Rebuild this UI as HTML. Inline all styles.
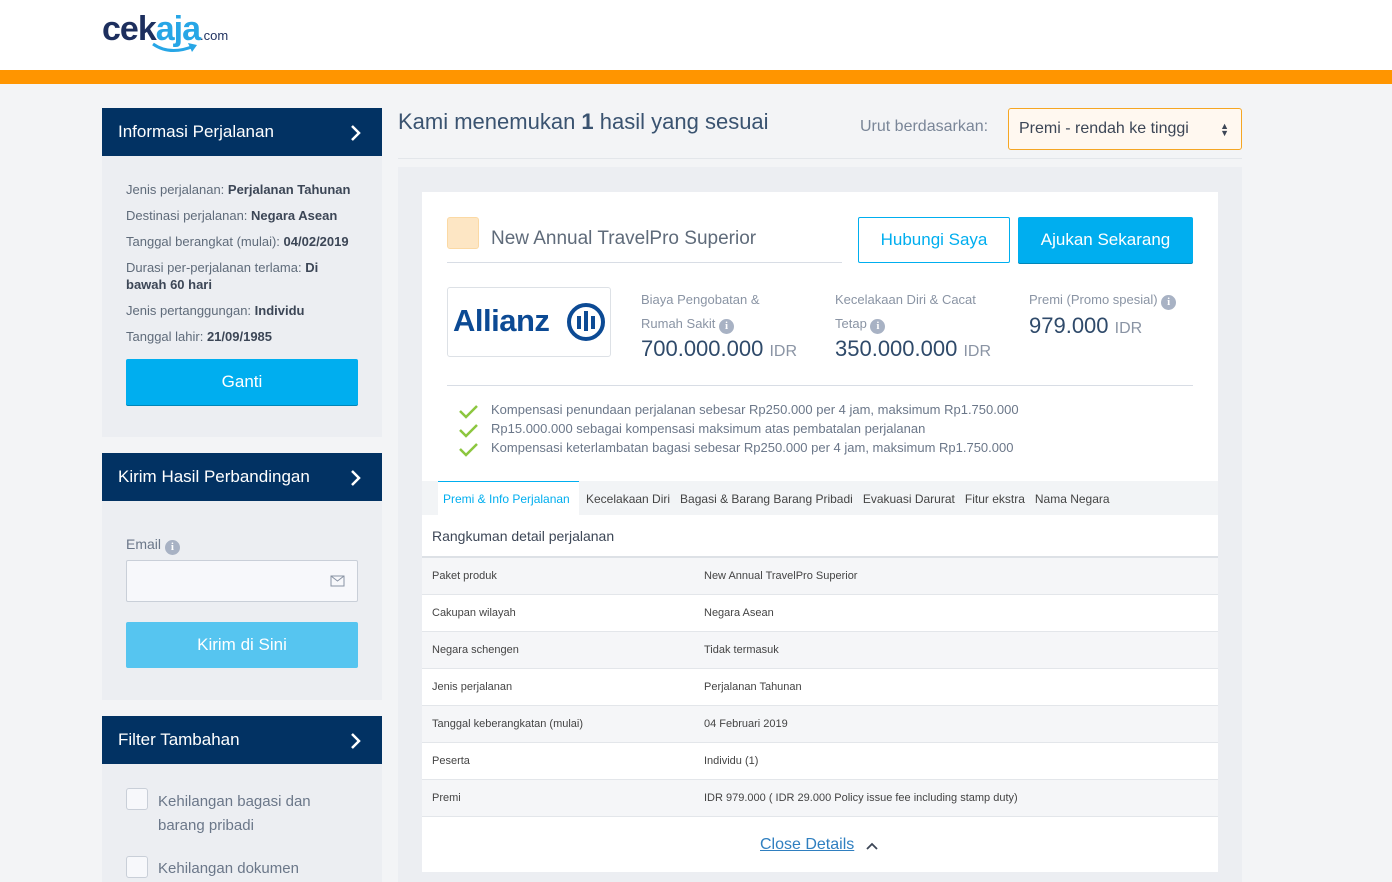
<!DOCTYPE html>
<html><head><meta charset="utf-8"><style>
*{box-sizing:border-box;margin:0;padding:0}
html,body{width:1392px;height:882px;overflow:hidden}
body{background:#f3f4f6;font-family:"Liberation Sans",sans-serif;color:#5a6a80;position:relative}
.a{position:absolute}
.hd{background:#023263;color:#fff;font-size:17px;height:48px;line-height:48px;padding-left:16px}
.hd svg{position:absolute;right:20px;top:16px}
.pb{background:#eceef2}
.btn{position:absolute;border-radius:2px;color:#fff;text-align:center;font-size:17px}
.sb p{font-size:13px;color:#5f6b7a;margin-bottom:9px;line-height:17px}
.sb b{color:#3c4656}
.row{position:absolute;left:422px;width:796px;height:37px;border-bottom:1px solid #e3e6ea;font-size:11px;color:#444;line-height:37px}
.row span{position:absolute;left:10px}.row i{font-style:normal;position:absolute;left:282px}
.info{display:inline-block;width:15px;height:15px;border-radius:50%;background:#a8b2c4;color:#fff;font-size:11px;line-height:15px;text-align:center;font-weight:bold;vertical-align:-1px;font-family:"Liberation Serif",serif}
</style></head><body>
<div class="a" style="left:0;top:0;width:1392px;height:70px;background:#fff"></div>
<div class="a" style="left:102px;top:10px;font-size:34px;font-weight:bold;letter-spacing:-1px;color:#1d2f5e">cek<span style="color:#27a6e6">aja</span><span style="font-size:13px;font-weight:normal;letter-spacing:0;color:#1d2f5e">.com</span></div>
<svg class="a" style="left:150px;top:40px" width="50" height="18"><path d="M3 4 Q20 16 44 6" stroke="#27a6e6" stroke-width="3" fill="none"/><path d="M38 3 L47 5 L42 12Z" fill="#27a6e6"/></svg>
<div class="a" style="left:0;top:70px;width:1392px;height:14px;background:#ff9500"></div>

<div class="a sb" style="left:102px;top:108px;width:280px">
<div class="hd" style="position:relative">Informasi Perjalanan<svg width="12" height="18"><path d="M2 2 L9 9 L2 16" stroke="#fff" stroke-width="2.5" fill="none"/></svg></div>
<div class="pb" style="height:281px;padding:25px 24px">
<p>Jenis perjalanan: <b>Perjalanan Tahunan</b></p>
<p>Destinasi perjalanan: <b>Negara Asean</b></p>
<p>Tanggal berangkat (mulai): <b>04/02/2019</b></p>
<p>Durasi per-perjalanan terlama: <b>Di bawah 60 hari</b></p>
<p>Jenis pertanggungan: <b>Individu</b></p>
<p>Tanggal lahir: <b>21/09/1985</b></p>
</div></div>
<div class="btn" style="left:126px;top:359px;width:232px;height:46px;line-height:46px;background:#00aeef;box-shadow:0 1px 0 #0086b8">Ganti</div>

<div class="a" style="left:102px;top:453px;width:280px">
<div class="hd" style="position:relative">Kirim Hasil Perbandingan<svg width="12" height="18"><path d="M2 2 L9 9 L2 16" stroke="#fff" stroke-width="2.5" fill="none"/></svg></div>
<div class="pb" style="height:199px"></div></div>
<div class="a" style="left:126px;top:536px;font-size:14px;color:#6b7789">Email <span class="info">i</span></div>
<div class="a" style="left:126px;top:560px;width:232px;height:42px;background:#f7f8fb;border:1px solid #c9cfd8;border-radius:2px"></div>
<svg class="a" style="left:330px;top:575px" width="15" height="12"><rect x="1" y="1" width="13" height="10" fill="none" stroke="#8a94a4"/><path d="M1 1 L7.5 6 L14 1" fill="none" stroke="#8a94a4"/></svg>
<div class="btn" style="left:126px;top:622px;width:232px;height:46px;line-height:46px;background:#56c5f0">Kirim di Sini</div>

<div class="a" style="left:102px;top:716px;width:280px">
<div class="hd" style="position:relative">Filter Tambahan<svg width="12" height="18"><path d="M2 2 L9 9 L2 16" stroke="#fff" stroke-width="2.5" fill="none"/></svg></div>
<div class="pb" style="height:130px"></div></div>
<div class="a" style="left:126px;top:788px;width:22px;height:22px;border:1px solid #c9cfd8;border-radius:3px;background:#f7f8fb"></div>
<div class="a" style="left:158px;top:790px;font-size:15px;line-height:24px;color:#6b7789">Kehilangan bagasi dan<br>barang pribadi</div>
<div class="a" style="left:126px;top:856px;width:22px;height:22px;border:1px solid #c9cfd8;border-radius:3px;background:#f7f8fb"></div>
<div class="a" style="left:158px;top:858px;font-size:15px;line-height:22px;color:#6b7789">Kehilangan dokumen</div>

<div class="a" style="left:398px;top:109px;font-size:22px;color:#3a5370">Kami menemukan <b>1</b> hasil yang sesuai</div>
<div class="a" style="left:860px;top:118px;font-size:16px;color:#7a8698">Urut berdasarkan:</div>
<div class="a" style="left:1008px;top:108px;width:234px;height:42px;border:1px solid #f5a623;border-radius:3px;background:#fff8f0;font-size:16px;line-height:40px;padding-left:10px;color:#3c4656">Premi - rendah ke tinggi<span style="position:absolute;right:12px;font-size:9px;line-height:7px;top:14px">▲<br>▼</span></div>
<div class="a" style="left:398px;top:158px;width:844px;height:1px;background:#e3e6ea"></div>
<div class="a" style="left:398px;top:167px;width:844px;height:715px;background:#eceef2"></div>
<div class="a" style="left:422px;top:192px;width:796px;height:680px;background:#fff"></div>

<div class="a" style="left:447px;top:217px;width:32px;height:32px;background:#fde6c4;border:1px solid #fbd9a4;border-radius:3px"></div>
<div class="a" style="left:491px;top:228px;font-size:19px;color:#5f6b7a">New Annual TravelPro Superior</div>
<div class="a" style="left:447px;top:262px;width:395px;height:1px;background:#d8dde5"></div>
<div class="btn" style="left:858px;top:217px;width:152px;height:46px;line-height:44px;border:1px solid #00aeef;color:#00aeef;background:#fff">Hubungi Saya</div>
<div class="btn" style="left:1018px;top:217px;width:175px;height:46px;line-height:46px;background:#00aeef;box-shadow:0 1px 0 #0086b8">Ajukan Sekarang</div>

<div class="a" style="left:447px;top:287px;width:164px;height:70px;border:1px solid #dde1e6;border-radius:3px"></div>
<div class="a" style="left:453px;top:303px;font-size:31px;font-weight:bold;color:#0c4a94;letter-spacing:-0.5px">Allianz</div>
<svg class="a" style="left:566px;top:302px" width="40" height="40"><circle cx="20" cy="20" r="17" fill="none" stroke="#0c4a94" stroke-width="4"/><rect x="11" y="14" width="4" height="13" fill="#0c4a94"/><rect x="18" y="9" width="4" height="20" fill="#0c4a94"/><rect x="25" y="14" width="4" height="13" fill="#0c4a94"/></svg>

<div class="a" style="left:641px;top:288px;font-size:13px;line-height:24px;color:#8a94a4">Biaya Pengobatan &amp;<br>Rumah Sakit <span class="info">i</span></div>
<div class="a" style="left:641px;top:336px;font-size:22px;color:#2f4a6a">700.000.000 <span style="font-size:16px;color:#8a94a4">IDR</span></div>
<div class="a" style="left:835px;top:288px;font-size:13px;line-height:24px;color:#8a94a4">Kecelakaan Diri &amp; Cacat<br>Tetap <span class="info">i</span></div>
<div class="a" style="left:835px;top:336px;font-size:22px;color:#2f4a6a">350.000.000 <span style="font-size:16px;color:#8a94a4">IDR</span></div>
<div class="a" style="left:1029px;top:288px;font-size:13px;line-height:24px;color:#8a94a4">Premi (Promo spesial) <span class="info">i</span></div>
<div class="a" style="left:1029px;top:313px;font-size:22px;color:#2f4a6a">979.000 <span style="font-size:16px;color:#8a94a4">IDR</span></div>
<div class="a" style="left:447px;top:385px;width:746px;height:1px;background:#d8dde5"></div>

<div class="a" style="left:491px;top:400px;font-size:13px;line-height:19px;color:#6b7789">Kompensasi penundaan perjalanan sebesar Rp250.000 per 4 jam, maksimum Rp1.750.000<br>Rp15.000.000 sebagai kompensasi maksimum atas pembatalan perjalanan<br>Kompensasi keterlambatan bagasi sebesar Rp250.000 per 4 jam, maksimum Rp1.750.000</div>
<svg class="a" style="left:459px;top:403px" width="20" height="56"><g stroke="#8cc63f" stroke-width="2.5" fill="none"><path d="M1 8 L7 14 L18 3"/><path d="M1 27 L7 33 L18 22"/><path d="M1 46 L7 52 L18 41"/></g></svg>

<div class="a" style="left:422px;top:481px;width:796px;height:34px;background:#f2f4f6"></div>
<div class="a" style="left:438px;top:481px;width:141px;height:34px;background:#fff;border-top:1px solid #00aeef"></div>
<div class="a" style="left:443px;top:492px;font-size:12px;color:#00aeef">Premi &amp; Info Perjalanan</div>
<div class="a" style="left:586px;top:492px;font-size:12px;color:#444">Kecelakaan Diri&nbsp;&nbsp; Bagasi &amp; Barang Barang Pribadi&nbsp;&nbsp; Evakuasi Darurat&nbsp;&nbsp; Fitur ekstra&nbsp;&nbsp; Nama Negara</div>
<div class="a" style="left:432px;top:528px;font-size:14px;color:#3c4656">Rangkuman detail perjalanan</div>
<div class="a" style="left:422px;top:556px;width:796px;height:2px;background:#dde1e6"></div>
<div class="row" style="top:558px;background:#f5f6f8"><span>Paket produk</span><i>New Annual TravelPro Superior</i></div>
<div class="row" style="top:595px"><span>Cakupan wilayah</span><i>Negara Asean</i></div>
<div class="row" style="top:632px;background:#f5f6f8"><span>Negara schengen</span><i>Tidak termasuk</i></div>
<div class="row" style="top:669px"><span>Jenis perjalanan</span><i>Perjalanan Tahunan</i></div>
<div class="row" style="top:706px;background:#f5f6f8"><span>Tanggal keberangkatan (mulai)</span><i>04 Februari 2019</i></div>
<div class="row" style="top:743px"><span>Peserta</span><i>Individu (1)</i></div>
<div class="row" style="top:780px;background:#f5f6f8"><span>Premi</span><i>IDR 979.000 ( IDR 29.000 Policy issue fee including stamp duty)</i></div>
<div class="a" style="left:760px;top:836px;font-size:16px;color:#2f7fc0;text-decoration:underline">Close Details </div>
<svg class="a" style="left:865px;top:841px" width="14" height="10"><path d="M2 8 L7 3 L12 8" stroke="#3c4656" stroke-width="1.8" fill="none"/></svg>
</body></html>
